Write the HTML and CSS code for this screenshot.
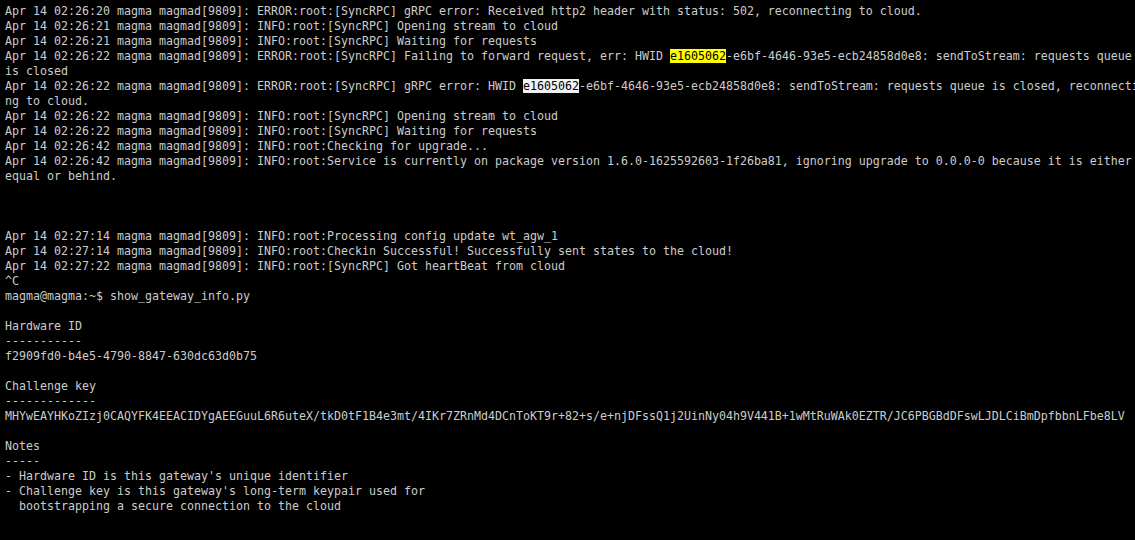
FILE: index.html
```html
<!DOCTYPE html>
<html lang="en">
<head>
<meta charset="utf-8">
<title>Terminal</title>
<link rel="stylesheet" href="styles.css">
</head>
<body>
<pre class="term">Apr 14 02:26:20 magma magmad[9809]: ERROR:root:[SyncRPC] gRPC error: Received http2 header with status: 502, reconnecting to cloud.
Apr 14 02:26:21 magma magmad[9809]: INFO:root:[SyncRPC] Opening stream to cloud
Apr 14 02:26:21 magma magmad[9809]: INFO:root:[SyncRPC] Waiting for requests
Apr 14 02:26:22 magma magmad[9809]: ERROR:root:[SyncRPC] Failing to forward request, err: HWID <span class="hl-yellow">e1605062</span>-e6bf-4646-93e5-ecb24858d0e8: sendToStream: requests queue
is closed
Apr 14 02:26:22 magma magmad[9809]: ERROR:root:[SyncRPC] gRPC error: HWID <span class="hl-white">e1605062</span>-e6bf-4646-93e5-ecb24858d0e8: sendToStream: requests queue is closed, reconnecti
ng to cloud.
Apr 14 02:26:22 magma magmad[9809]: INFO:root:[SyncRPC] Opening stream to cloud
Apr 14 02:26:22 magma magmad[9809]: INFO:root:[SyncRPC] Waiting for requests
Apr 14 02:26:42 magma magmad[9809]: INFO:root:Checking for upgrade...
Apr 14 02:26:42 magma magmad[9809]: INFO:root:Service is currently on package version 1.6.0-1625592603-1f26ba81, ignoring upgrade to 0.0.0-0 because it is either
equal or behind.



Apr 14 02:27:14 magma magmad[9809]: INFO:root:Processing config update wt_agw_1
Apr 14 02:27:14 magma magmad[9809]: INFO:root:Checkin Successful! Successfully sent states to the cloud!
Apr 14 02:27:22 magma magmad[9809]: INFO:root:[SyncRPC] Got heartBeat from cloud
^C
magma@magma:~$ show_gateway_info.py

Hardware ID
-----------
f2909fd0-b4e5-4790-8847-630dc63d0b75

Challenge key
-------------
MHYwEAYHKoZIzj0CAQYFK4EEACIDYgAEEGuuL6R6uteX/tkD0tF1B4e3mt/4IKr7ZRnMd4DCnToKT9r+82+s/e+njDFssQ1j2UinNy04h9V441B+1wMtRuWAk0EZTR/JC6PBGBdDFswLJDLCiBmDpfbbnLFbe8LV

Notes
-----
- Hardware ID is this gateway's unique identifier
- Challenge key is this gateway's long-term keypair used for
  bootstrapping a secure connection to the cloud
</pre>
</body>
</html>
```
FILE: styles.css
```css
html, body {
  margin: 0;
  padding: 0;
  background: #000000;
  height: 100%;
  overflow: hidden;
}

.term {
  margin: 0;
  padding: 4px 0 0 5px;
  font-family: "DejaVu Sans Mono", "Liberation Mono", monospace;
  font-size: 11.63px;
  line-height: 15px;
  color: #cccccc;
  white-space: pre;
  overflow: hidden;
}

.hl-yellow {
  background: #ffff00;
  color: #000000;
}

.hl-white {
  background: #f2f2f2;
  color: #000000;
}
```
